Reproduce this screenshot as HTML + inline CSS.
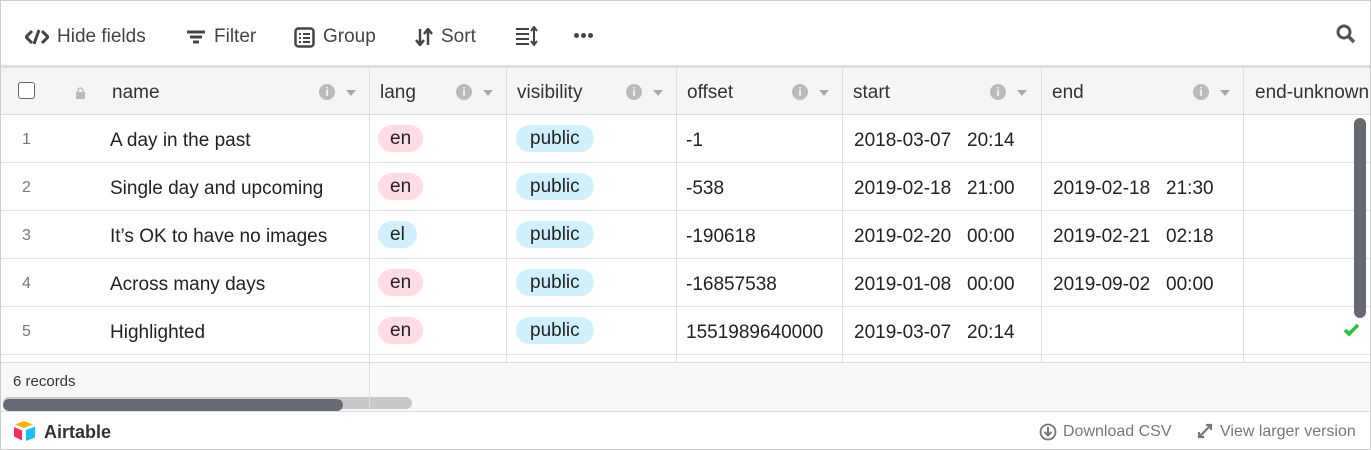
<!DOCTYPE html><html><head><style>
*{margin:0;padding:0;box-sizing:border-box}
body{width:1371px;height:450px;overflow:hidden;font-family:"Liberation Sans",sans-serif;background:#fff;position:relative;color:#333}
.frame{position:absolute;inset:0;border:1px solid #ccc}
.tb{position:absolute;top:0;left:0;right:0;height:68px;border-bottom:3px solid #ddd;background:#fff}
.tbi{position:absolute;top:26px;font-size:19px;color:#444;display:flex;align-items:center;gap:8px}
.hdr{position:absolute;top:68px;left:1px;right:1px;height:47px;background:#f5f5f5;border-bottom:1px solid #ddd}
.h{position:absolute;top:14px;font-size:19px;color:#333}
.vl{position:absolute;width:1px;background:#ddd}
.row{position:absolute;left:1px;right:1px;height:48px;border-bottom:1px solid #e2e2e2}
.c{position:absolute;top:15px;font-size:19px;color:#222;white-space:nowrap}
.num{position:absolute;left:21px;top:16px;font-size:16px;color:#777}
.pill{position:absolute;top:10px;height:27px;line-height:27px;border-radius:14px;font-size:19px;padding:0 12px;color:#222}
.en{background:#ffdce5}.el{background:#d0f0fd}.pub{background:#d0f0fd;padding:0 14px}
.info{position:absolute;top:16px;width:16px;height:16px;border-radius:50%;background:#bbb;color:#f5f5f5;font-size:12px;font-weight:bold;text-align:center;line-height:16px}
.arr{position:absolute;top:22px;width:0;height:0;border-left:5px solid transparent;border-right:5px solid transparent;border-top:6px solid #aaa}
.dot{position:absolute;top:33px;width:5px;height:5px;border-radius:50%;background:#444}
</style></head><body>
<div class="tb">
<div class="tbi" style="left:25px"><svg width="24" height="18" viewBox="0 0 24 18"><path d="M7 3L1 9l6 6M17 3l6 6-6 6" stroke="#444" stroke-width="3" fill="none"/><path d="M14 2L9 16" stroke="#444" stroke-width="3"/></svg>Hide fields</div>
<div class="tbi" style="left:186px"><svg width="20" height="16"><path d="M1 3h18M4 8h12M7 13h6" stroke="#444" stroke-width="3"/></svg>Filter</div>
<div class="tbi" style="left:294px"><svg width="21" height="21"><rect x="1.5" y="1.5" width="18" height="18" rx="3" fill="none" stroke="#444" stroke-width="2.5"/><path d="M5 7h2M9 7h7M5 11h2M9 11h7M5 15h2M9 15h7" stroke="#444" stroke-width="2"/></svg>Group</div>
<div class="tbi" style="left:415px"><svg width="18" height="18"><path d="M5 1v15M1 12l4 5 4-5M13 17V2M9 6l4-5 4 5" stroke="#444" stroke-width="2.5" fill="none"/></svg>Sort</div>
<div class="tbi" style="left:515px"><svg width="24" height="20"><path d="M1 3h13M1 8h13M1 13h13M1 18h13" stroke="#444" stroke-width="2"/><path d="M19 2v16M16 5l3-4 3 4M16 15l3 4 3-4" stroke="#444" stroke-width="2" fill="none"/></svg></div>
<div class="dot" style="left:574px"></div><div class="dot" style="left:581px"></div><div class="dot" style="left:588px"></div>
<svg style="position:absolute;right:15px;top:24px" width="20" height="20"><circle cx="8" cy="8" r="6" stroke="#555" stroke-width="3" fill="none"/><path d="M12.5 12.5L18 18" stroke="#555" stroke-width="3.5"/></svg>
</div>
<div class="hdr">
<div style="position:absolute;left:17px;top:14px;width:17px;height:17px;border:1.5px solid #666;border-radius:3px;background:#fff"></div>
<svg style="position:absolute;left:74px;top:19px" width="11" height="12"><rect x="1" y="5" width="9" height="7" fill="#bbb"/><path d="M3 6V3.5a2.5 2.5 0 015 0V6" stroke="#bbb" stroke-width="1.5" fill="none"/></svg>
<div class="h" style="left:111px">name</div><div class="info" style="left:318px">i</div><div class="arr" style="left:345px"></div>
<div class="h" style="left:379px">lang</div><div class="info" style="left:455px">i</div><div class="arr" style="left:482px"></div>
<div class="h" style="left:516px">visibility</div><div class="info" style="left:625px">i</div><div class="arr" style="left:652px"></div>
<div class="h" style="left:686px">offset</div><div class="info" style="left:791px">i</div><div class="arr" style="left:818px"></div>
<div class="h" style="left:852px">start</div><div class="info" style="left:989px">i</div><div class="arr" style="left:1016px"></div>
<div class="h" style="left:1051px">end</div><div class="info" style="left:1192px">i</div><div class="arr" style="left:1219px"></div>
<div class="h" style="left:1254px">end-unknown</div>
</div>
<div class="row" style="top:115px"><div class="num">1</div><div class="c" style="left:109px">A day in the past</div><div class="pill en" style="left:377px">en</div><div class="pill pub" style="left:515px">public</div><div class="c" style="left:685px">-1</div><div class="c" style="left:853px">2018-03-07&nbsp;&nbsp;&nbsp;20:14</div></div>
<div class="row" style="top:163px"><div class="num">2</div><div class="c" style="left:109px">Single day and upcoming</div><div class="pill en" style="left:377px">en</div><div class="pill pub" style="left:515px">public</div><div class="c" style="left:685px">-538</div><div class="c" style="left:853px">2019-02-18&nbsp;&nbsp;&nbsp;21:00</div><div class="c" style="left:1052px">2019-02-18&nbsp;&nbsp;&nbsp;21:30</div></div>
<div class="row" style="top:211px"><div class="num">3</div><div class="c" style="left:109px">It’s OK to have no images</div><div class="pill el" style="left:377px">el</div><div class="pill pub" style="left:515px">public</div><div class="c" style="left:685px">-190618</div><div class="c" style="left:853px">2019-02-20&nbsp;&nbsp;&nbsp;00:00</div><div class="c" style="left:1052px">2019-02-21&nbsp;&nbsp;&nbsp;02:18</div></div>
<div class="row" style="top:259px"><div class="num">4</div><div class="c" style="left:109px">Across many days</div><div class="pill en" style="left:377px">en</div><div class="pill pub" style="left:515px">public</div><div class="c" style="left:685px">-16857538</div><div class="c" style="left:853px">2019-01-08&nbsp;&nbsp;&nbsp;00:00</div><div class="c" style="left:1052px">2019-09-02&nbsp;&nbsp;&nbsp;00:00</div></div>
<div class="row" style="top:307px"><div class="num">5</div><div class="c" style="left:109px">Highlighted</div><div class="pill en" style="left:377px">en</div><div class="pill pub" style="left:515px">public</div><div class="c" style="left:685px">1551989640000</div><div class="c" style="left:853px">2019-03-07&nbsp;&nbsp;&nbsp;20:14</div><svg style="position:absolute;left:1342px;top:16px" width="17" height="14"><path d="M2 7l4 4 9-9" stroke="#20c933" stroke-width="3.5" fill="none"/></svg></div>
<div class="vl" style="left:369px;top:68px;height:344px"></div>
<div class="vl" style="left:506px;top:68px;height:294px"></div>
<div class="vl" style="left:676px;top:68px;height:294px"></div>
<div class="vl" style="left:842px;top:68px;height:294px"></div>
<div class="vl" style="left:1041px;top:68px;height:294px"></div>
<div class="vl" style="left:1243px;top:68px;height:294px"></div>
<div style="position:absolute;left:1354px;top:118px;width:12px;height:200px;border-radius:6px;background:#666a73"></div>
<div style="position:absolute;left:1px;right:1px;top:362px;height:50px;background:#f8f8f8;border-top:1px solid #ddd;border-bottom:1px solid #ddd">
<div style="position:absolute;left:12px;top:10px;font-size:15px;color:#333">6 records</div>
<div style="position:absolute;left:2px;top:34px;width:409px;height:12px;border-radius:6px;background:#c8c8c8"></div>
<div style="position:absolute;left:2px;top:36px;width:340px;height:12px;border-radius:6px;background:#666a73"></div>
<div class="vl" style="left:368px;top:0;height:48px"></div>
</div>
<svg style="position:absolute;left:13px;top:420px" width="26" height="22"><path d="M11 1l9 3.5-9 3.5-9-3.5z" fill="#fcb400"/><path d="M13 10l9-3.5v11l-9 3.5z" fill="#18bfff"/><path d="M1 7l8 3.5v10l-8-4z" fill="#f82b60"/></svg>
<div style="position:absolute;left:44px;top:422px;font-size:18px;font-weight:bold;color:#333">Airtable</div>
<svg style="position:absolute;left:1039px;top:423px" width="18" height="18"><circle cx="9" cy="9" r="7.5" fill="none" stroke="#777" stroke-width="1.8"/><path d="M9 4v8M5.5 9l3.5 3.5 3.5-3.5" stroke="#777" stroke-width="2" fill="none"/></svg>
<div style="position:absolute;left:1063px;top:423px;font-size:16px;color:#777">Download CSV</div>
<svg style="position:absolute;left:1197px;top:423px" width="16" height="16"><path d="M2 14L14 2M9 2h5v5M2 9v5h5" stroke="#777" stroke-width="2.2" fill="none"/></svg>
<div style="position:absolute;left:1220px;top:423px;font-size:16px;color:#777">View larger version</div>
<div class="frame"></div>
</body></html>
